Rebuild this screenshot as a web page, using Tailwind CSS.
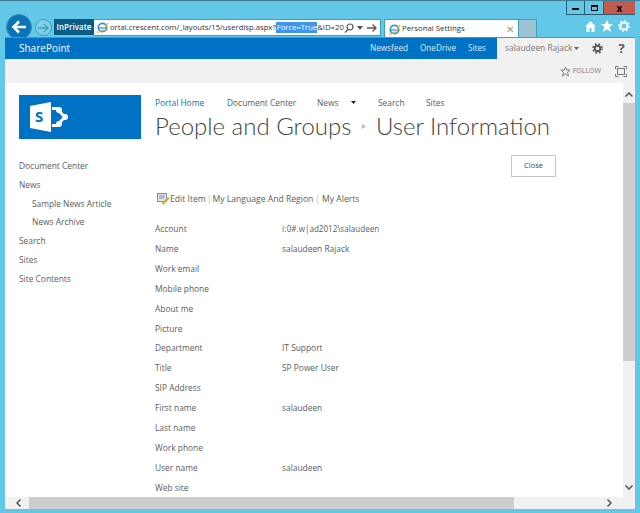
<!DOCTYPE html>
<html lang="en">
<head>
<meta charset="UTF-8">
<title>Personal Settings</title>
<script src="https://cdn.jsdelivr.net/npm/@tailwindcss/browser@4"></script>
</head>
<body class="w-[640px] h-[513px] overflow-hidden bg-[#63c8e8] font-['Open_Sans',sans-serif] text-[#5c5c5c] border-t border-[#3f7f96]">

<!-- browser chrome -->
<div class="h-[36px] relative">
    <div class="flex justify-end pr-[5px] h-[15px]">
        <div class="w-[19px] h-[14px] border border-t-0 border-[#2c5a70] flex items-center justify-center"><div class="w-[7px] h-[2px] mt-[3px] bg-black"></div></div>
        <div class="w-[19px] h-[14px] border border-t-0 border-l-0 border-[#2c5a70] flex items-center justify-center"><div class="w-[7px] h-[6px] border border-t-2 border-black"></div></div>
        <div class="w-[31px] h-[14px] bg-[#c25a4e] border-b border-[#2c5a70] flex items-center justify-center text-[10px] font-bold leading-none text-black">x</div>
    </div>
    <div class="flex items-start pl-[6px] pt-[3px]">
        <div class="w-[26px] h-[26px] -mt-[5px] rounded-full bg-[#0a74b4] border border-[#2e8fc0] flex items-center justify-center shrink-0">
            <svg width="16" height="14" viewBox="0 0 16 14" fill="none" stroke="#fff" stroke-width="2.6"><path d="M15 7H3M8 1.5 2.5 7 8 12.5"/></svg>
        </div>
        <div class="w-[17px] h-[17px] ml-[3px] rounded-full border border-[#3f9dbd] bg-[#7dd0e8] flex items-center justify-center shrink-0">
            <svg width="11" height="10" viewBox="0 0 11 10" fill="none" stroke="#3f9dbd" stroke-width="1.3"><path d="M0 5h9.5M6 1l4 4-4 4"/></svg>
        </div>
        <div class="w-[40px] h-[16px] ml-[2px] bg-[#0c5a86] text-white text-[8px] font-semibold leading-[16px] text-center shrink-0">InPrivate</div>
        <div class="w-[287px] h-[17px] bg-white border border-[#3f9dbd] border-l-0 flex items-center text-[7.7px] text-[#333] overflow-hidden shrink-0">
            <svg class="ml-[2px] shrink-0" width="13" height="13" viewBox="0 0 13 13" fill="none"><circle cx="6.5" cy="6.5" r="4.2" stroke="#2f97d8" stroke-width="1.8"/><path d="M2 7h9" stroke="#2f97d8" stroke-width="1.2"/><path d="M1 11c3 1 8-3 11-9" stroke="#e9b52d" stroke-width="1.2"/></svg>
            <span class="ml-[1px] whitespace-nowrap">ortal.crescent.com/_layouts/15/userdisp.aspx?</span><span class="bg-[#3c96ee] text-white whitespace-nowrap pl-[1px]">Force=True</span><span class="whitespace-nowrap">&amp;ID=20</span>
            <svg class="ml-auto shrink-0" width="10" height="10" viewBox="0 0 10 10" fill="none" stroke="#555" stroke-width="1.2"><circle cx="6" cy="4" r="3"/><path d="M4 6.5 1 9.5"/></svg>
            <svg class="ml-[3px] shrink-0" width="6" height="4" viewBox="0 0 6 4" fill="#555"><path d="M0 0h6L3 4z"/></svg>
            <svg class="ml-[4px] mr-[3px] shrink-0" width="10" height="10" viewBox="0 0 10 10" fill="none" stroke="#555" stroke-width="1.3"><path d="M0 5h9M5.5 1.500 9 5 5.500 8.500"/></svg>
        </div>
        <div class="w-[135px] h-[19px] ml-[3px] bg-white border border-b-0 border-[#3f9dbd] flex items-center text-[7.8px] text-[#333] shrink-0">
            <svg class="ml-[3px] shrink-0" width="13" height="13" viewBox="0 0 13 13" fill="none"><circle cx="6.5" cy="6.5" r="4.2" stroke="#2f97d8" stroke-width="1.8"/><path d="M2 7h9" stroke="#2f97d8" stroke-width="1.2"/><path d="M1 11c3 1 8-3 11-9" stroke="#e9b52d" stroke-width="1.2"/></svg>
            <span class="ml-[1px]">Personal Settings</span>
            <span class="ml-auto mr-[4px] text-[10px] text-[#999]">✕</span>
        </div>
        <div class="w-[18px] h-[19px] bg-[#9cc5d4] border-r border-t border-[#3f9dbd] shrink-0"></div>
        <div class="flex items-center gap-[5px] ml-[48px] mt-[1px]">
            <svg width="11" height="11" viewBox="0 0 11 11" fill="#fff"><path d="M5.5 0 0 5.5h1.5V11h3V7h2v4h3V5.5H11z"/></svg>
            <svg width="12" height="12" viewBox="0 0 12 12" fill="#fff"><path d="m6 0 1.800 4H12L8.700 6.800 10 12 6 9.200 2 12l1.300-5.200L0 4h4.200z"/></svg>
            <svg width="12" height="12" viewBox="0 0 12 12" fill="none" stroke="#fff" stroke-width="2"><circle cx="6" cy="6" r="3.600"/><circle cx="6" cy="6" r="5.200" stroke-width="1.200" stroke-dasharray="2 2"/></svg>
        </div>
    </div>
</div>

<!-- browser viewport -->
<div class="ml-[5px] mr-[5px] h-[472px] bg-white border-t border-[#3f9dbd] flex flex-col relative">
    <!-- suite bar -->
    <div class="h-[21px] flex shrink-0">
        <div class="w-[492px] bg-[#0072c6] flex items-center text-white pl-[14px]">
            <span class="text-[10px]">SharePoint</span>
            <div class="ml-auto flex gap-[12px] pr-[11px] text-[8.2px]">
                <span class="text-[#dcecf7]">Newsfeed</span>
                <span class="text-[#dcecf7]">OneDrive</span>
                <span class="text-[#dcecf7]">Sites</span>
            </div>
        </div>
        <div class="flex-1 bg-[#f1f1f1] flex items-center pl-[8px] text-[#777] text-[8.4px]">
            <span class="whitespace-nowrap">salaudeen Rajack</span>
            <svg class="ml-[2px]" width="5" height="3" viewBox="0 0 5 3" fill="#666"><path d="M0 0h5L2.500 3z"/></svg>
            <svg class="ml-[13px]" width="11" height="11" viewBox="0 0 12 12" fill="none" stroke="#555" stroke-width="2"><circle cx="6" cy="6" r="3"/><circle cx="6" cy="6" r="5" stroke-dasharray="2 2" stroke-width="1.600"/></svg>
            <span class="ml-[15px] text-[13px] font-bold text-[#555]">?</span>
        </div>
    </div>
    <!-- ribbon row -->
    <div class="h-[24px] bg-[#f1f1f1] flex items-center justify-end text-[7px] text-[#777] pr-[8px] shrink-0">
        <svg width="11" height="11" viewBox="0 0 12 12" fill="none" stroke="#777"><path d="m6 1 1.500 3.400H11L8.200 6.800 9.200 11 6 8.600 2.800 11l1-4.200L1 4.400h3.500z"/></svg>
        <span class="ml-[2px]">FOLLOW</span>
        <svg class="ml-[14px]" width="12" height="11" viewBox="0 0 12 11" fill="none" stroke="#777"><path d="M.5 3V.5h3M8.500.5h3V3M.5 8v2.500h3M8.500 10.500h3V8"/><rect x="2.500" y="2.500" width="7" height="6"/></svg>
    </div>
    <div class="flex-1 flex min-h-0">
        <!-- page -->
        <div class="flex-1 flex overflow-hidden">
            <!-- left nav -->
            <div class="w-[150px] pl-[14px] shrink-0 pt-[12px]">
                <div class="w-[122px] h-[44px] bg-[#0072c6] flex items-center pl-[11px]">
                    <svg width="39" height="30" viewBox="0 0 39 30"><path d="M0 4 21 0v30L0 26z" fill="#fff"/><path d="M22 5h5l10 10-10 10h-5v-3h4l7-7-7-7h-4z" fill="#fff"/><circle cx="29" cy="8" r="3" fill="#fff"/><circle cx="35" cy="15" r="3" fill="#fff"/><circle cx="29" cy="22" r="3" fill="#fff"/><text x="5" y="20" font-size="15" font-weight="700" fill="#0072c6" font-family="Open Sans">S</text></svg>
                </div>
                <ul class="mt-[18.300px] text-[8.4px] leading-[18.700px]">
                    <li>Document Center</li>
                    <li>News</li>
                    <li class="pl-[13px]">Sample News Article</li>
                    <li class="pl-[13px]">News Archive</li>
                    <li>Search</li>
                    <li>Sites</li>
                    <li>Site Contents</li>
                </ul>
            </div>
            <!-- main -->
            <div class="flex-1 pt-[14px] min-w-0">
                <div class="flex text-[8.4px] leading-[12px]">
                    <span class="text-[#0072c6] w-[72px]">Portal Home</span>
                    <span class="w-[90px]">Document Center</span>
                    <span class="w-[34px]">News</span>
                    <svg class="mt-[4px] mr-[22px]" width="5" height="3" viewBox="0 0 5 3" fill="#222"><path d="M0 0h5L2.500 3z"/></svg>
                    <span class="w-[48px]">Search</span>
                    <span>Sites</span>
                </div>
                <h1 class="text-[24px] font-['Lato',sans-serif] font-light leading-[33px] text-[#444] whitespace-nowrap flex items-center">
                    <span class="w-[198px]">People and Groups</span>
                    <svg class="ml-[9px] mr-[10px] mt-[2px]" width="4" height="5" viewBox="0 0 4 5" fill="#bbb"><path d="M0 0l4 2.500L0 5z"/></svg>
                    <span>User Information</span>
                </h1>
                <div class="flex justify-end pr-[67px] mt-[13px]">
                    <div class="w-[45px] h-[22px] bg-white border border-[#c6c6c6] text-[7.500px] text-[#444] flex items-center justify-center">Close</div>
                </div>
                <div class="flex items-center text-[8.6px] mt-[15px] h-[14px] ml-[2px]">
                    <svg width="13" height="12" viewBox="0 0 13 12" fill="none"><rect x=".5" y=".5" width="9" height="8" fill="#dfe6ee" stroke="#7d8ea3"/><path d="M2 3h6M2 5h5" stroke="#7d8ea3"/><path d="m5 10 6-6 1.500 1.500-6 6H5z" fill="#d9a13a"/></svg>
                    <span>Edit Item</span>
                    <span class="mx-[1px] text-[#bbb]">|</span>
                    <span>My Language And Region</span>
                    <span class="mx-[2px] text-[#bbb]">|</span>
                    <span>My Alerts</span>
                </div>
                <div class="mt-[13px] text-[8.4px] leading-[19.9px] grid grid-cols-[127px_1fr]">
                    <div>Account</div><div><span class="tracking-[0.2px]">i:</span><span class="text-[8.1px]">0#.w|ad2012\salaudeen</span></div>
                    <div>Name</div><div>salaudeen Rajack</div>
                    <div>Work email</div><div></div>
                    <div>Mobile phone</div><div></div>
                    <div>About me</div><div></div>
                    <div>Picture</div><div></div>
                    <div>Department</div><div>IT Support</div>
                    <div>Title</div><div>SP Power User</div>
                    <div>SIP Address</div><div></div>
                    <div>First name</div><div>salaudeen</div>
                    <div>Last name</div><div></div>
                    <div>Work phone</div><div></div>
                    <div>User name</div><div>salaudeen</div>
                    <div>Web site</div><div></div>
                </div>
            </div>
        </div>
        <!-- vertical scrollbar -->
        <div class="w-[12px] bg-[#f1f1f1] flex flex-col shrink-0">
            <div class="h-[20px] flex items-center justify-center mt-[1px]"><svg width="8" height="5" viewBox="0 0 8 5" fill="none" stroke="#555" stroke-width="1.500"><path d="M.5 4.500 4 1l3.500 3.500"/></svg></div>
            <div class="h-[258px] bg-[#cdcdcd] mt-[-1px]"></div>
            <div class="mt-auto h-[20px] flex items-center justify-center"><svg width="8" height="5" viewBox="0 0 8 5" fill="none" stroke="#555" stroke-width="1.500"><path d="M.5.500 4 4 7.500.500"/></svg></div>
        </div>
    </div>
    <!-- horizontal scrollbar -->
    <div class="h-[12px] bg-[#f1f1f1] flex items-center shrink-0">
        <div class="w-[24px] flex justify-center pl-[2px]"><svg width="5" height="8" viewBox="0 0 5 8" fill="none" stroke="#555" stroke-width="1.500"><path d="M4.500.500 1 4l3.500 3.500"/></svg></div>
        <div class="w-[485px] h-full bg-[#cdcdcd]"></div>
        <div class="ml-auto mr-[23px]"><svg width="5" height="8" viewBox="0 0 5 8" fill="none" stroke="#555" stroke-width="1.500"><path d="M.5.500 4 4 .5 7.500"/></svg></div>
    </div>
</div>
</body>
</html>
